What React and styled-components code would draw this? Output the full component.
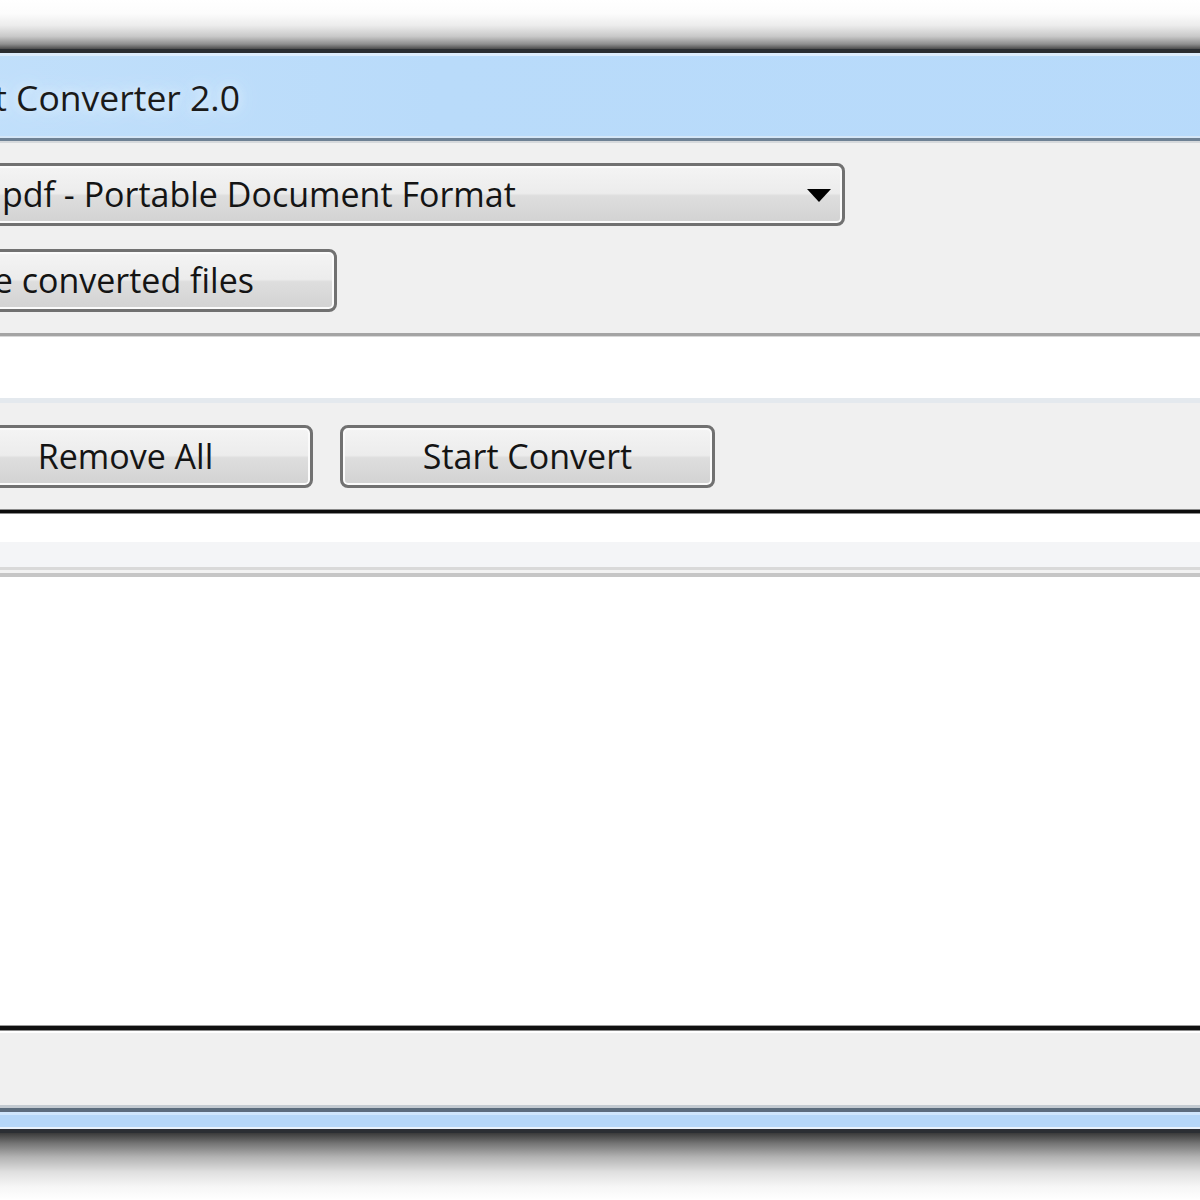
import React from 'react'
import styled, { createGlobalStyle } from 'styled-components'

const COLORS = {
  face: '#f0f0f0',
  aero: '#b9dbfa',
  text: '#141414',
  edge: '#717171'
}

const GlobalStyle = createGlobalStyle`
  html, body {
    margin: 0;
    padding: 0;
    background: #ffffff;
    overflow: hidden;
  }
  body {
    font-family: 'Open Sans', 'Noto Sans', 'DejaVu Sans', sans-serif;
    color: ${COLORS.text};
  }
`

const Page = styled.div`
  width: 1200px;
  height: 1200px;
  overflow: hidden;
  display: flex;
  flex-direction: column;
`

const Shadow = styled.div`
  flex: 0 0 ${p => p.$h}px;
  background: ${p => p.$top
    ? 'linear-gradient(to bottom, #ffffff 0%, #fcfcfc 28%, #ececec 52%, #c9c9c9 74%, #8f8f8f 90%, #4c4c4c 100%)'
    : 'linear-gradient(to bottom, #3a3a3a 0%, #767676 16%, #b3b3b3 36%, #dfdfdf 58%, #f6f6f6 80%, #ffffff 100%)'};
`

const Window = styled.div`
  margin-left: -200px;
  width: 1600px;
  display: flex;
  flex-direction: column;
`

const Rule = styled.div`
  flex: 0 0 ${p => p.$h}px;
  background: ${p => p.$c};
`

const TitleBar = styled.div`
  height: 80px;
  display: flex;
  align-items: center;
  background: linear-gradient(to right, #c4e1fb 0%, ${COLORS.aero} 40%, #b7dafb 100%);
`

const Title = styled.h1`
  margin: 0;
  width: 440px;
  text-align: right;
  font-size: 35.5px;
  font-weight: 500;
  color: #1a1a1a;
  padding-top: 2px;
  text-shadow: 0 0 10px #e6f2fe, 0 0 22px #dcedfd;
  white-space: nowrap;
`

const TopPanel = styled.div`
  height: 190px;
  box-sizing: border-box;
  padding: 20px 0 21px 0;
  background: ${COLORS.face};
  display: flex;
  flex-direction: column;
  gap: 23px;
`

const Chrome = styled.button`
  box-sizing: border-box;
  height: 63px;
  border: 3px solid ${COLORS.edge};
  border-radius: 8px;
  background: linear-gradient(to bottom, #f4f4f4 0%, #ececec 48%, #dedede 52%, #d2d2d2 100%);
  box-shadow: inset 0 0 0 2px #fbfbfb;
  font-family: inherit;
  font-size: 34px;
  font-weight: 500;
  color: ${COLORS.text};
  white-space: nowrap;
  padding: 0;
`

const Select = styled(Chrome)`
  margin-left: 182px;
  width: 863px;
  display: flex;
  align-items: center;
  justify-content: space-between;
  padding: 0 11px 1px 17px;
`

const Arrow = styled.span`
  width: 0;
  height: 0;
  border-left: 12px solid transparent;
  border-right: 12px solid transparent;
  border-top: 13px solid #000;
  margin-top: 2px;
`

const ButtonSlot = styled.div`
  width: 537px;
  display: flex;
  justify-content: flex-end;
`

const Button = styled(Chrome)`
  width: ${p => (p.$w ? `${p.$w}px` : 'auto')};
  padding: ${p => (p.$w ? '0 0 2px' : '0 80px 2px')};
`

const Field = styled.div`
  height: 61px;
  background: #ffffff;
`

const ActionRow = styled.div`
  height: 106px;
  box-sizing: border-box;
  padding: 22px 0 21px 138px;
  background: ${COLORS.face};
  display: flex;
  gap: 27px;
  align-items: flex-start;
`

const List = styled.div`
  display: flex;
  flex-direction: column;
  background: #ffffff;
`

const ListHeader = styled.div`
  height: 63px;
  box-sizing: border-box;
  background: linear-gradient(to bottom, #ffffff 0 45%, #f4f5f7 45% 84%, #d9d9d9 84% 89%, #f2f2f2 89% 93%, #c6c6c6 93% 100%);
`

const ListBody = styled.div`
  height: 448px;
`

const StatusBar = styled.div`
  height: 72px;
  background: ${COLORS.face};
`

const FrameEdge = styled.div`
  height: 15px;
  background: linear-gradient(to bottom, #cfe6fc 0 20%, #b5d7f8 20% 100%);
`

export default function App () {
  return (
    <Page>
      <GlobalStyle />
      <Shadow $h={49} $top />
      <Window>
        <Rule $h={4} $c='#2a2d31' />
        <Rule $h={3} $c='#dcecfc' />
        <TitleBar>
          <Title>Document Converter 2.0</Title>
        </TitleBar>
        <Rule $h={2} $c='#d4e6f7' />
        <Rule $h={3} $c='#6e8194' />
        <Rule $h={2} $c='#d6d9dc' />
        <TopPanel>
          <Select>
            <span>pdf - Portable Document Format</span>
            <Arrow />
          </Select>
          <ButtonSlot>
            <Button>Open the converted files</Button>
          </ButtonSlot>
        </TopPanel>
        <Rule $h={3} $c='#a4a4a4' />
        <Rule $h={1} $c='#d8d8d8' />
        <Field />
        <Rule $h={5} $c='#e4e9ee' />
        <ActionRow>
          <Button $w={375}>Remove All</Button>
          <Button $w={375}>Start Convert</Button>
        </ActionRow>
        <List>
          <Rule $h={1} $c='#8a8a8a' />
          <Rule $h={3} $c='#0c0c0c' />
          <Rule $h={1} $c='#8a8a8a' />
          <ListHeader />
          <ListBody />
          <Rule $h={1} $c='#9a9a9a' />
          <Rule $h={4} $c='#101010' />
          <Rule $h={1} $c='#8a8a8a' />
          <Rule $h={2} $c='#ffffff' />
        </List>
        <StatusBar />
        <Rule $h={3} $c='#c3cad1' />
        <Rule $h={4} $c='#5c6c7d' />
        <FrameEdge />
        <Rule $h={2} $c='#e8f2fb' />
        <Rule $h={4} $c='#2b2e33' />
      </Window>
      <Shadow $h={67} />
    </Page>
  )
}
